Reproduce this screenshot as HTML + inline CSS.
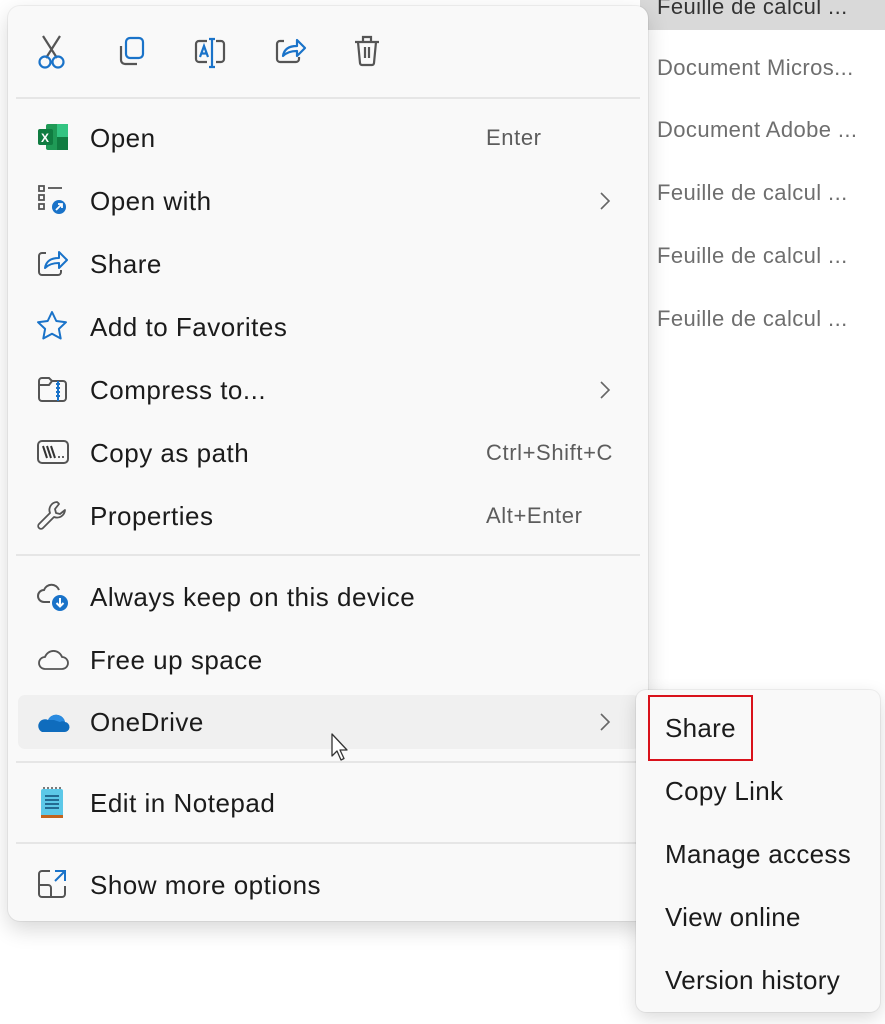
<!DOCTYPE html>
<html><head><meta charset="utf-8"><style>
*{margin:0;padding:0;box-sizing:border-box}
body{width:885px;height:1024px;background:#fff;position:relative;overflow:hidden;font-family:"Segoe UI","Liberation Sans",sans-serif;color:#1b1b1b}
.bgt{position:absolute;left:657px;font-size:22px;letter-spacing:0.4px;color:#6e6e6e;white-space:nowrap}
.band{position:absolute;left:640px;top:0;width:245px;height:30px;background:#d9d9d9}
.menu{position:absolute;left:8px;top:6px;width:640px;height:915px;background:#f9f9f9;border-radius:12px;box-shadow:0 8px 22px rgba(0,0,0,.16),0 0 0 1px rgba(0,0,0,.05)}
.sep{position:absolute;left:8px;right:8px;height:2px;background:#e6e6e6}
.it{position:absolute;left:82px;font-size:26px;letter-spacing:0.5px;white-space:nowrap;line-height:30px}
.sc{position:absolute;left:478px;font-size:22px;letter-spacing:0.6px;color:#5c5c5c;line-height:30px}
.ch{position:absolute;left:590px;width:14px;height:20px}
.ic{position:absolute;left:28px;width:34px;height:34px}
.sub{position:absolute;left:636px;top:690px;width:244px;height:322px;background:#f9f9f9;border-radius:10px;box-shadow:0 6px 18px rgba(0,0,0,.15),0 0 0 1px rgba(0,0,0,.05)}
.si{position:absolute;left:29px;font-size:26px;letter-spacing:0.3px;line-height:30px;white-space:nowrap}
svg{overflow:visible}
</style></head><body>
<div class="band"></div>
<div class="bgt" style="top:-6px;color:#333">Feuille de calcul ...</div>
<div class="bgt" style="top:55px">Document Micros...</div>
<div class="bgt" style="top:117px">Document Adobe ...</div>
<div class="bgt" style="top:180px">Feuille de calcul ...</div>
<div class="bgt" style="top:243px">Feuille de calcul ...</div>
<div class="bgt" style="top:306px">Feuille de calcul ...</div>

<div class="menu">
 <svg style="position:absolute;left:30px;top:30px" width="30" height="32" fill="none" stroke-width="2.2"><path d="M5 0 L19 22 M22 0 L8 22" stroke="#555"/><circle cx="7" cy="26" r="5.5" stroke="#1a73c9"/><circle cx="20" cy="26" r="5.5" stroke="#1a73c9"/></svg>
 <svg style="position:absolute;left:109px;top:30px" width="30" height="30" fill="none" stroke-width="2.2"><rect x="9" y="2" width="17" height="20" rx="4" stroke="#1a73c9"/><path d="M4 10 v14 a4 4 0 0 0 4 4 h12" stroke="#555"/></svg>
 <svg style="position:absolute;left:186px;top:31px" width="34" height="32" fill="none" stroke-width="2.2"><path d="M13 4 H5 a3 3 0 0 0 -3 3 v15 a3 3 0 0 0 3 3 h8 M22 4 h5 a3 3 0 0 1 3 3 v15 a3 3 0 0 1 -3 3 h-5" stroke="#555"/><path d="M6 20 L10 9 L14 20 M7.5 16.5 h5" stroke="#1a73c9"/><path d="M18 2 v28 M15 2 h6 M15 30 h6" stroke="#1a73c9"/></svg>
 <svg style="position:absolute;left:266px;top:31px" width="32" height="30" fill="none" stroke-width="2.2"><path d="M10 4 H6 a3 3 0 0 0 -3 3 v15 a3 3 0 0 0 3 3 h16 a3 3 0 0 0 3 -3 v-2" stroke="#555"/><path d="M9 19 c1 -7 6 -10 14 -10 v-6 l8 8 -8 8 v-5 c-6 0 -11 2 -14 5z" stroke="#1a73c9" stroke-linejoin="round"/></svg>
 <svg style="position:absolute;left:346px;top:29px" width="28" height="34" fill="none" stroke="#555" stroke-width="2.2"><path d="M1 7 h24 M9 7 V2 h8 v5 M4 7 l2 21 a2 2 0 0 0 2 2 h10 a2 2 0 0 0 2 -2 l2 -21 M11 12 v11 M15 12 v11"/></svg>
 <div class="sep" style="top:91px"></div>

 <svg class="ic" style="top:115px" width="34" height="34"><rect x="10" y="3" width="22" height="26" rx="2" fill="#1f9a56"/><rect x="21" y="3" width="11" height="13" fill="#33c481"/><rect x="21" y="16" width="11" height="13" fill="#107c41"/><rect x="2" y="8" width="15" height="16" rx="2" fill="#107c41"/><text x="5" y="21" fill="#fff" font-size="12" font-weight="bold" font-family="Liberation Sans">X</text></svg>
 <div class="it" style="top:117px">Open</div><div class="sc" style="top:117px">Enter</div>
 <svg class="ic" style="top:177px" width="34" height="34" fill="none" stroke="#555" stroke-width="1.8"><rect x="3" y="3" width="5" height="5"/><rect x="3" y="12" width="5" height="5"/><rect x="3" y="21" width="5" height="5"/><path d="M12 5 h14"/><circle cx="23" cy="24" r="7" fill="#1a73c9" stroke="none"/><path d="M20 27 l6 -6 M22 21 h4 v4" stroke="#fff"/></svg>
 <div class="it" style="top:180px">Open with</div>
 <svg class="ch" style="top:185px" width="14" height="20" fill="none" stroke="#666" stroke-width="1.6"><path d="M3 2 l8 8 -8 8"/></svg>
 <svg class="ic" style="top:242px" width="34" height="34" fill="none" stroke-width="2"><path d="M10 5 H6 a3 3 0 0 0 -3 3 v16 a3 3 0 0 0 3 3 h16 a3 3 0 0 0 3 -3 v-2" stroke="#555"/><path d="M9 20 c1 -7 6 -10 14 -10 v-6 l8 8 -8 8 v-5 c-6 0 -11 2 -14 5z" stroke="#1a73c9" stroke-linejoin="round"/></svg>
 <div class="it" style="top:243px">Share</div>
 <svg class="ic" style="top:304px" width="34" height="34" fill="none" stroke="#1a73c9" stroke-width="2" stroke-linejoin="round"><path d="M16 2 l4.3 9 9.7 1.2 -7.1 6.7 1.8 9.6 -8.7 -4.8 -8.7 4.8 1.8 -9.6 -7.1 -6.7 9.7 -1.2z"/></svg>
 <div class="it" style="top:306px">Add to Favorites</div>
 <svg class="ic" style="top:367px" width="34" height="34" fill="none" stroke-width="2"><path d="M3 8 a3 3 0 0 1 3 -3 h7 l3 3 h11 a3 3 0 0 1 3 3 v14 a3 3 0 0 1 -3 3 h-21 a3 3 0 0 1 -3 -3z M3 12 h10 l3 -4" stroke="#555"/><path d="M22 8 v20 M20 11 h4 M20 15 h4 M20 19 h4 M20 23 h4" stroke="#1a73c9"/></svg>
 <div class="it" style="top:369px">Compress to...</div>
 <svg class="ch" style="top:374px" width="14" height="20" fill="none" stroke="#666" stroke-width="1.6"><path d="M3 2 l8 8 -8 8"/></svg>
 <svg class="ic" style="top:430px" width="34" height="34" fill="none" stroke-width="2"><rect x="2" y="5" width="30" height="22" rx="4" stroke="#555"/><path d="M7 10 l4 12 M11 10 l4 12 M15 10 l4 12" stroke="#333"/><circle cx="23" cy="21" r="1" fill="#333" stroke="none"/><circle cx="27" cy="21" r="1" fill="#333" stroke="none"/></svg>
 <div class="it" style="top:432px">Copy as path</div><div class="sc" style="top:432px">Ctrl+Shift+C</div>
 <svg class="ic" style="top:493px" width="34" height="34" fill="none" stroke="#555" stroke-width="1.8" stroke-linejoin="round"><path d="M21 3 a8 8 0 0 0 -7 11 L3 25 a2.8 2.8 0 0 0 4 4 L18 18 a8 8 0 0 0 11 -7 l-5 4 -4 -1 -1 -4 4 -5 a8 8 0 0 0 -2 -2z"/></svg>
 <div class="it" style="top:495px">Properties</div><div class="sc" style="top:495px">Alt+Enter</div>
 <div class="sep" style="top:548px"></div>
 <svg class="ic" style="top:574px" width="34" height="34" fill="none" stroke-width="2"><path d="M14 22 H8 a6 6 0 0 1 0 -12 a8 8 0 0 1 15 0" stroke="#555"/><circle cx="24" cy="23" r="8" fill="#1a73c9"/><path d="M24 18 v8 M20.5 23 l3.5 3.5 3.5 -3.5" stroke="#fff"/></svg>
 <div class="it" style="top:576px">Always keep on this device</div>
 <svg class="ic" style="top:638px" width="34" height="34" fill="none" stroke="#555" stroke-width="1.8"><path d="M9 25 h17 a6 6 0 0 0 0 -12 a9 9 0 0 0 -17 0 a6 6 0 0 0 0 12z"/></svg>
 <div class="it" style="top:639px">Free up space</div>
 <div style="position:absolute;left:10px;top:689px;width:622px;height:54px;background:#f0f0f0;border-radius:7px"></div>
 <svg class="ic" style="top:700px" width="34" height="34"><path d="M6 26 h22 a5 5 0 0 0 1 -10 a9 9 0 0 0 -17 -2 a6 6 0 0 0 -6 12z" fill="#0f6cbd"/><path d="M12 14 a9 9 0 0 1 17 2 a5 5 0 0 0 -5 0 l-6 -2z" fill="#2a8be0"/></svg>
 <div class="it" style="top:701px">OneDrive</div>
 <svg class="ch" style="top:706px" width="14" height="20" fill="none" stroke="#666" stroke-width="1.6"><path d="M3 2 l8 8 -8 8"/></svg>
 <svg style="position:absolute;left:323px;top:727px" width="22" height="32"><path d="M1 1 v22 l5 -5 4 9 3 -1.5 -4 -8.5 h7z" fill="#fff" stroke="#333" stroke-width="1.3" stroke-linejoin="round"/></svg>
 <div class="sep" style="top:755px"></div>
 <svg class="ic" style="top:780px" width="34" height="34"><rect x="5" y="3" width="22" height="28" rx="2" fill="#5cc8e8"/><rect x="5" y="29" width="22" height="3" fill="#c2641e"/><path d="M9 10 h14 M9 14 h14 M9 18 h14 M9 22 h14" stroke="#1b5c86" stroke-width="1.8"/><path d="M8 3 v-2 M12 3 v-2 M16 3 v-2 M20 3 v-2 M24 3 v-2" stroke="#444" stroke-width="1.4"/></svg>
 <div class="it" style="top:782px">Edit in Notepad</div>
 <div class="sep" style="top:836px"></div>
 <svg class="ic" style="top:862px" width="34" height="34" fill="none" stroke-width="2"><path d="M14 3 H6 a3 3 0 0 0 -3 3 v20 a3 3 0 0 0 3 3 h20 a3 3 0 0 0 3 -3 v-8 M3 17 h9 a3 3 0 0 1 3 3 v9" stroke="#555"/><path d="M19 3 h10 v10 M29 3 l-10 10" stroke="#1a73c9"/></svg>
 <div class="it" style="top:864px">Show more options</div>
</div>

<div class="sub">
 <div class="si" style="top:23px">Share</div>
 <div class="si" style="top:86px">Copy Link</div>
 <div class="si" style="top:149px">Manage access</div>
 <div class="si" style="top:212px">View online</div>
 <div class="si" style="top:275px">Version history</div>
</div>
<div style="position:absolute;left:648px;top:695px;width:105px;height:66px;border:2px solid #d9121b"></div>
</body></html>
